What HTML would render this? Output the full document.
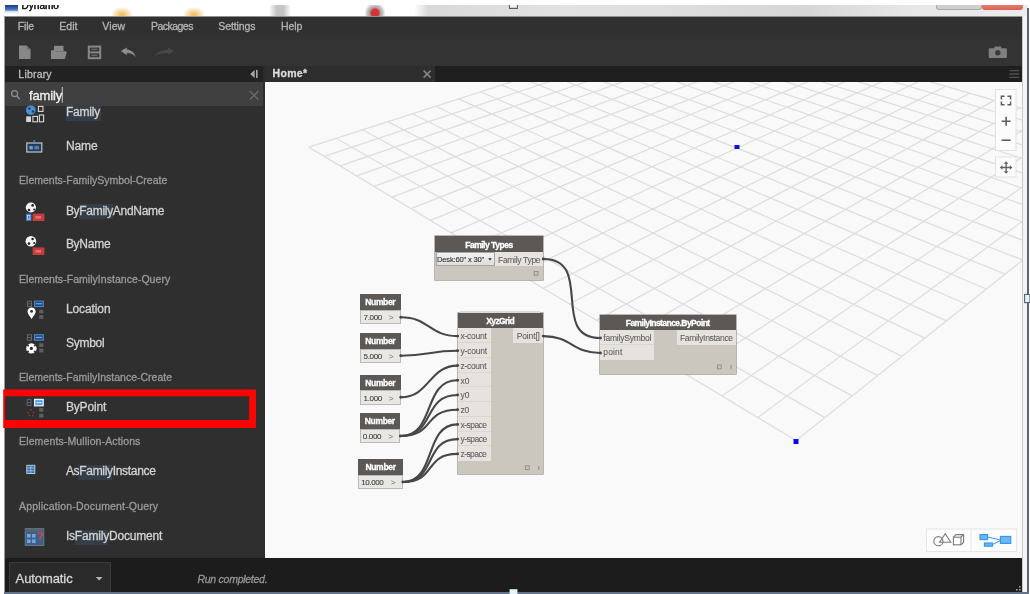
<!DOCTYPE html>
<html>
<head>
<meta charset="utf-8">
<title>Dynamo</title>
<style>
html,body{margin:0;padding:0;}
body{width:1030px;height:594px;position:relative;overflow:hidden;background:#ffffff;font-family:'Liberation Sans',sans-serif;}
.a{position:absolute;}
.t{position:absolute;white-space:pre;font-family:'Liberation Sans',sans-serif;-webkit-text-stroke:0.3px currentColor;}
svg{position:absolute;left:0;top:0;overflow:visible;}
.nh{position:absolute;background:#5c5856;}
.nb{position:absolute;background:#cbc7bf;}
.pl{position:absolute;background:#e6e3de;}
.hl{position:absolute;background:#353d48;height:15px;margin-top:1px;}
</style>
</head>
<body>
<div id="root" style="position:absolute;left:0;top:0;width:1030px;height:594px;will-change:transform;filter:blur(0.45px);">
<!-- window chrome -->
<div class="a" id="titlebar" style="left:4px;top:5px;width:1024px;height:12px;background:linear-gradient(90deg,#ffffff 0,#ffffff 410px,#d9d9d9 424px,#e2e2e2 560px,#dcdcdc 700px,#d6d6d6 800px,#e6e6e6 900px,#ececec 1024px);"></div>
<div class="a" style="left:5px;top:4.7px;width:13px;height:6.5px;background:linear-gradient(180deg,#1c3a85,#3f67b4 60%,#7f9fd6);"></div><div class="a" style="left:4px;top:11px;width:15px;height:3px;background:linear-gradient(180deg,rgba(190,205,225,0.7),rgba(255,255,255,0));"></div>
<div class="a" style="left:21.6px;top:4.7px;width:60px;height:8px;overflow:hidden;"><div class="t" style="left:0;top:-4.6px;font-size:10px;line-height:12px;color:#1c1c1c;text-shadow:0 0 0.5px #1c1c1c;">Dynamo</div></div>
<div class="a" style="left:111px;top:7px;width:22px;height:10px;background:radial-gradient(ellipse at 50% 75%,#efb856 0,rgba(241,190,100,0) 72%);"></div>
<div class="a" style="left:183px;top:7px;width:22px;height:10px;background:radial-gradient(ellipse at 50% 75%,#efb856 0,rgba(241,190,100,0) 72%);"></div>
<div class="a" style="left:269px;top:5px;width:22px;height:12px;background:linear-gradient(90deg,rgba(200,200,200,0),#c4c4c4 35%,#c4c4c4 65%,rgba(200,200,200,0));"></div>
<div class="a" style="left:359px;top:5px;width:32px;height:11.5px;overflow:hidden;"><div class="a" style="left:0;top:-1px;width:32px;height:18px;background:radial-gradient(circle at 50% 50%,#d23434 0,#d23434 3.6px,#c08080 5px,#b4b4b4 6.2px,#c2c2c2 7.6px,rgba(215,215,215,0) 10.5px);"></div></div>
<div class="a" style="left:936px;top:5px;width:46px;height:5px;background:#cfcfcf;border:1px solid #a9a9a9;border-top:0;border-radius:0 0 3px 3px;box-sizing:border-box;"></div>
<div class="a" style="left:982px;top:5px;width:41px;height:5px;background:linear-gradient(180deg,#e8806c,#d8614f);border-radius:0 0 3px 3px;"></div>
<div class="a" style="left:1022px;top:16px;width:5px;height:576px;background:#f4f4f4;border-left:1px solid #c9c9c9;box-sizing:border-box;"></div>
<div class="a" style="left:1027px;top:8px;width:2px;height:586px;background:#56657a;"></div>
<div class="a" style="left:4px;top:592.4px;width:1025px;height:1.6px;background:#63748a;"></div>

<!-- app -->
<div class="a" style="left:4px;top:16px;width:1px;height:576px;background:#9a9a9a;"></div>
<div class="a" style="left:4px;top:16px;width:1018px;height:1px;background:#8f8f8f;"></div>
<div class="a" id="menubar" style="left:5px;top:17px;width:1017px;height:22px;background:#303030;"></div>
<div class="a" id="toolbar" style="left:5px;top:39px;width:1017px;height:27px;background:#333333;"></div>
<div class="a" id="libhead" style="left:5px;top:66px;width:258px;height:16px;background:#222222;"></div><div class="a" style="left:263px;top:66px;width:3px;height:16px;background:#2b2b2b;"></div><div class="a" style="left:5px;top:37px;width:1017px;height:1px;background:#343434;"></div>
<div class="a" id="tabbar" style="left:265px;top:66px;width:757px;height:16px;background:#1f1f1f;"></div>
<div class="a" id="tab" style="left:265px;top:66px;width:170px;height:16px;background:#2e2e2e;"></div>
<div class="a" id="sidebar" style="left:5px;top:82px;width:260px;height:476px;background:#2f2f2f;"></div>
<div class="a" id="search" style="left:5px;top:82px;width:258px;height:24px;background:#404040;"></div>
<div class="a" id="canvas" style="left:265px;top:82px;width:757px;height:476px;background:#f9f9f9;"></div>
<div class="a" id="status" style="left:5px;top:558px;width:1017px;height:34px;background:#1c1c1c;"></div>
<div class="a" id="runbox" style="left:9px;top:562px;width:102px;height:30px;background:#2a2a2a;border:1px solid #3a3a3a;border-bottom:0;box-sizing:border-box;"></div>

<!-- highlights -->
<div class="hl" style="left:66px;top:104.5px;width:34.5px;"></div>
<div class="hl" style="left:79.3px;top:203px;width:34px;"></div>
<div class="hl" style="left:78.4px;top:464px;width:34px;"></div>
<div class="hl" style="left:74.8px;top:528.5px;width:33.5px;"></div>

<!-- canvas svg -->
<svg width="1030" height="594" viewBox="0 0 1030 594">
<defs><clipPath id="cc"><rect x="265" y="82" width="757" height="476"/></clipPath></defs>
<g clip-path="url(#cc)">
<g stroke='#dedede' stroke-width='1.25' fill='none'><line x1='308.8' y1='147.1' x2='710.5' y2='17.8'/><line x1='308.8' y1='147.1' x2='796.1' y2='440.5'/><line x1='324.2' y1='156.3' x2='727.1' y2='22.7'/><line x1='336.1' y1='138.3' x2='824.9' y2='417.6'/><line x1='340.1' y1='165.9' x2='744.1' y2='27.6'/><line x1='362.5' y1='129.8' x2='852.1' y2='395.9'/><line x1='356.7' y1='175.9' x2='761.7' y2='32.7'/><line x1='387.8' y1='121.6' x2='877.7' y2='375.6'/><line x1='374.1' y1='186.4' x2='779.8' y2='38.0'/><line x1='412.3' y1='113.8' x2='901.9' y2='356.3'/><line x1='392.1' y1='197.2' x2='798.4' y2='43.4'/><line x1='435.8' y1='106.2' x2='924.8' y2='338.1'/><line x1='410.9' y1='208.6' x2='817.6' y2='49.0'/><line x1='458.6' y1='98.9' x2='946.5' y2='320.9'/><line x1='430.5' y1='220.4' x2='837.3' y2='54.7'/><line x1='480.6' y1='91.8' x2='967.0' y2='304.5'/><line x1='451.1' y1='232.8' x2='857.7' y2='60.7'/><line x1='501.8' y1='85.0' x2='986.5' y2='289.0'/><line x1='472.5' y1='245.7' x2='878.7' y2='66.8'/><line x1='522.4' y1='78.3' x2='1005.1' y2='274.2'/><line x1='495.0' y1='259.2' x2='900.3' y2='73.1'/><line x1='542.3' y1='72.0' x2='1022.8' y2='260.1'/><line x1='518.6' y1='273.4' x2='922.7' y2='79.6'/><line x1='561.5' y1='65.8' x2='1039.6' y2='246.7'/><line x1='543.3' y1='288.3' x2='945.8' y2='86.3'/><line x1='580.1' y1='59.8' x2='1055.7' y2='233.9'/><line x1='569.3' y1='304.0' x2='969.7' y2='93.2'/><line x1='598.2' y1='54.0' x2='1071.1' y2='221.7'/><line x1='596.6' y1='320.4' x2='994.3' y2='100.4'/><line x1='615.7' y1='48.3' x2='1085.8' y2='210.0'/><line x1='625.4' y1='337.8' x2='1019.9' y2='107.9'/><line x1='632.7' y1='42.9' x2='1099.9' y2='198.8'/><line x1='655.8' y1='356.1' x2='1046.3' y2='115.5'/><line x1='649.2' y1='37.6' x2='1113.4' y2='188.0'/><line x1='687.9' y1='375.4' x2='1073.7' y2='123.5'/><line x1='665.2' y1='32.4' x2='1126.3' y2='177.7'/><line x1='721.9' y1='395.9' x2='1102.1' y2='131.8'/><line x1='680.7' y1='27.4' x2='1138.7' y2='167.8'/><line x1='757.9' y1='417.5' x2='1131.6' y2='140.3'/><line x1='695.8' y1='22.6' x2='1150.7' y2='158.4'/><line x1='796.1' y1='440.5' x2='1162.1' y2='149.2'/><line x1='710.5' y1='17.8' x2='1162.1' y2='149.2'/></g>
<rect x="734.5" y="145" width="5" height="4" fill="#1010e0"/>
<rect x="793.5" y="439" width="5" height="5" fill="#0a0ae6"/>
</g>
</svg>

<!-- nodes -->
<!-- Family Types -->
<div class="nb" style="left:435px;top:236.4px;width:108px;height:43.7px;box-shadow:0 0 0 0.6px #8d8a85;"></div>
<div class="nh" style="left:435px;top:236.4px;width:108px;height:15.2px;"></div>
<div class="a" style="left:435.5px;top:251.5px;width:59px;height:14.5px;background:linear-gradient(180deg,#f3f3f3,#dddddd);border:1px solid #a5a5a5;box-sizing:border-box;"></div>
<div class="pl" style="left:494.5px;top:251.5px;width:48.5px;height:14.5px;"></div>
<!-- Numbers -->
<div class="nh" style="left:360px;top:293.5px;width:40.5px;height:16px;"></div>
<div class="pl" style="left:360px;top:309.5px;width:40.5px;height:14.5px;background:#e9e7e3;box-shadow:inset 0 0 0 1px #bdbab4;"></div>
<div class="nh" style="left:360px;top:332.5px;width:40.5px;height:16px;"></div>
<div class="pl" style="left:360px;top:348.5px;width:40.5px;height:14.5px;background:#e9e7e3;box-shadow:inset 0 0 0 1px #bdbab4;"></div>
<div class="nh" style="left:360px;top:374.5px;width:40.5px;height:15.5px;"></div>
<div class="pl" style="left:360px;top:390px;width:40.5px;height:14.5px;background:#e9e7e3;box-shadow:inset 0 0 0 1px #bdbab4;"></div>
<div class="nh" style="left:359.5px;top:413px;width:40.5px;height:15.5px;"></div>
<div class="pl" style="left:359.5px;top:428.5px;width:40.5px;height:14.5px;background:#e9e7e3;box-shadow:inset 0 0 0 1px #bdbab4;"></div>
<div class="nh" style="left:358px;top:459px;width:44.5px;height:15.5px;"></div>
<div class="pl" style="left:358px;top:474.5px;width:44.5px;height:14.5px;background:#e9e7e3;box-shadow:inset 0 0 0 1px #bdbab4;"></div>
<!-- XyzGrid -->
<div class="nb" style="left:457.5px;top:312.5px;width:85.5px;height:161.5px;box-shadow:0 0 0 0.6px #8d8a85;"></div>
<div class="nh" style="left:457.5px;top:312.5px;width:85.5px;height:15.5px;"></div>
<div class="pl" style="left:457.5px;top:328px;width:33.5px;height:133px;"></div>
<div class="pl" style="left:513px;top:328px;width:30px;height:15px;"></div>
<!-- FamilyInstance.ByPoint -->
<div class="nb" style="left:600.3px;top:314.5px;width:135.5px;height:59px;box-shadow:0 0 0 0.6px #8d8a85;"></div>
<div class="nh" style="left:600.3px;top:314.5px;width:135.5px;height:15.5px;"></div>
<div class="pl" style="left:600.3px;top:330px;width:53.5px;height:29.5px;"></div>
<div class="pl" style="left:676.5px;top:330px;width:59.3px;height:14.7px;"></div>
<div class="a" style="left:457.5px;top:342.32px;width:33.5px;height:0.8px;background:#dad7d1;"></div>
<div class="a" style="left:457.5px;top:357.04px;width:33.5px;height:0.8px;background:#dad7d1;"></div>
<div class="a" style="left:457.5px;top:371.76px;width:33.5px;height:0.8px;background:#dad7d1;"></div>
<div class="a" style="left:457.5px;top:386.48px;width:33.5px;height:0.8px;background:#dad7d1;"></div>
<div class="a" style="left:457.5px;top:401.20px;width:33.5px;height:0.8px;background:#dad7d1;"></div>
<div class="a" style="left:457.5px;top:415.92px;width:33.5px;height:0.8px;background:#dad7d1;"></div>
<div class="a" style="left:457.5px;top:430.64px;width:33.5px;height:0.8px;background:#dad7d1;"></div>
<div class="a" style="left:457.5px;top:445.36px;width:33.5px;height:0.8px;background:#dad7d1;"></div>
<div class="a" style="left:600.3px;top:344.3px;width:53.5px;height:0.8px;background:#dad7d1;"></div>
<div class="a" style="left:460px;top:310.6px;width:80px;height:2px;background:#dcdbd7;"></div>


<svg width="1030" height="594" viewBox="0 0 1030 594">
<g stroke='#474747' stroke-width='2.1' fill='none' stroke-linecap='round'><path d='M543.5,259.0 C594.6,259.0 549.2,338.0 600.3,338.0'/><path d='M401.0,317.2 C429.2,317.2 429.2,336.1 457.4,336.1'/><path d='M401.0,355.7 C429.2,355.7 429.2,350.8 457.4,350.8'/><path d='M401.0,397.2 C429.2,397.2 429.2,365.6 457.4,365.6'/><path d='M400.6,436.0 C435.8,436.0 422.2,380.3 457.4,380.3'/><path d='M400.6,436.0 C435.8,436.0 422.2,395.0 457.4,395.0'/><path d='M400.6,436.0 C435.8,436.0 422.2,409.7 457.4,409.7'/><path d='M403.0,482.0 C436.7,482.0 423.7,424.4 457.4,424.4'/><path d='M403.0,482.0 C436.7,482.0 423.7,439.1 457.4,439.1'/><path d='M403.0,482.0 C436.7,482.0 423.7,453.9 457.4,453.9'/><path d='M543.5,336.1 C571.9,336.1 571.9,353.0 600.3,353.0'/></g>
<!-- toolbar icons -->
<g fill="#888888">
<path d="M19,45.6 h7.6 l4,4 v9.4 h-11.6 z"/>
<path d="M26.6,45.6 v4 h4 z" fill="#6a6a6a"/>
<path d="M54,45.8 h9.5 v5.2 h-9.5 z"/>
<path d="M51,50.2 h3.6 l1,1 h9.6 l1.6,1 l-2,6.8 h-13.8 z"/>
</g>
<g fill="none" stroke="#888888" stroke-width="2">
<rect x="88.8" y="46.6" width="11.4" height="11.6"/>
<path d="M88.8,52.4 h11.4"/>
</g>
<rect x="91.5" y="48.6" width="6" height="1.6" fill="#666"/>
<rect x="91.5" y="54.6" width="6" height="1.6" fill="#666"/>
<path d="M120.8,51 l6,-3.6 v2.2 c4.6,0.4 7.8,3.2 9,7.4 c-2.4,-2.8 -5,-4 -9,-4 v2.2 z" fill="#8c8c8c"/>
<path d="M174,51 l-6,-3.4 v2.1 c-6,0.3 -11.4,2.6 -13.6,6.6 c3.4,-2.4 8.2,-3.4 13.6,-3.4 v2.1 z" fill="#474747"/>
<!-- camera -->
<g>
<rect x="988.7" y="48.2" width="18.2" height="9.8" rx="1" fill="#7f7f7f"/>
<rect x="994.3" y="46.6" width="7" height="2.4" rx="0.8" fill="#7f7f7f"/>
<circle cx="997.8" cy="52.8" r="2.7" fill="#3a3a3a"/>
</g>
<!-- hamburger -->
<g stroke="#505050" stroke-width="1.4">
<path d="M1009.4,70.6 h9.8 M1009.4,74 h9.8 M1009.4,77.4 h9.8"/>
</g>
<!-- library collapse -->
<path d="M250.2,73.9 l4.4,-4 v8 z" fill="#a8a8a8"/>
<rect x="256" y="69.9" width="1.6" height="8" fill="#a8a8a8"/>
<!-- tab close -->
<path d="M423.6,70.6 l7,7 M430.6,70.6 l-7,7" stroke="#858585" stroke-width="1.5" fill="none"/>
<!-- search icon + clear -->
<circle cx="14.6" cy="93.6" r="3" fill="none" stroke="#8a8a8a" stroke-width="1.3"/>
<path d="M16.8,96 l3,3.2" stroke="#8a8a8a" stroke-width="1.5" fill="none"/>
<path d="M249.8,91 l8.6,8.6 M258.4,91 l-8.6,8.6" stroke="#6a6a6a" stroke-width="1.4" fill="none"/>
<path d="M62.3,87 v15.6" stroke="#d8d8e8" stroke-width="0.9" fill="none"/>

<!-- sidebar icons -->
<!-- Family -->
<circle cx="30.8" cy="110.2" r="4.8" fill="#4a90d9"/>
<circle cx="29.4" cy="108.6" r="1.3" fill="#1f3f66"/><circle cx="33" cy="111.6" r="1.3" fill="#1f3f66"/>
<g fill="none" stroke="#d8d8d8" stroke-width="1.1">
<rect x="38.4" y="106.4" width="4.6" height="5"/>
<rect x="32.9" y="116.4" width="4.6" height="5.4"/>
<rect x="39.4" y="115" width="4.2" height="6.8"/>
</g>
<rect x="26.2" y="116.4" width="4.8" height="5.6" fill="#d8d8d8"/>
<!-- Name -->
<rect x="26.8" y="143" width="15" height="9" fill="#2a3c55" stroke="#c4c4c4" stroke-width="1.2"/>
<rect x="29.4" y="146" width="3.4" height="3.4" fill="#5fa0e0"/>
<rect x="34.4" y="146" width="4.6" height="3.4" fill="#4a7fb8"/>
<path d="M34.2,140 v3" stroke="#4a90d9" stroke-width="1.4"/>
<!-- ByFamilyAndName -->
<circle cx="30.9" cy="207.5" r="5.1" fill="#f4f4f4"/>
<circle cx="29" cy="210" r="1.3" fill="#222"/><circle cx="32.6" cy="205.4" r="1.3" fill="#222"/><circle cx="34.2" cy="209.4" r="1" fill="#222"/>
<rect x="26" y="213.6" width="5.4" height="7.4" fill="#3c78c4"/>
<rect x="27.4" y="215.4" width="2.6" height="3.8" fill="none" stroke="#cfe0f5" stroke-width="0.8"/>
<rect x="32.6" y="213.6" width="11.8" height="7.4" fill="#c43c3c"/>
<rect x="35.4" y="216" width="5.6" height="2.6" fill="#e07070"/>
<!-- ByName -->
<circle cx="30.9" cy="241.2" r="5.3" fill="#f4f4f4"/>
<circle cx="29" cy="243.6" r="1.3" fill="#222"/><circle cx="32.6" cy="239" r="1.3" fill="#222"/><circle cx="34.2" cy="243" r="1" fill="#222"/>
<rect x="32.6" y="247.4" width="11.8" height="7.6" fill="#c43c3c"/>
<rect x="35.4" y="250" width="5.6" height="2.6" fill="#e07070"/>
<!-- Location -->
<g id="qtop">
<rect x="27.6" y="301.2" width="3.8" height="5.4" fill="none" stroke="#707070" stroke-width="0.9"/>
<path d="M27.6,303.9 h3.8" stroke="#707070" stroke-width="0.8"/>
<rect x="34.5" y="301.1" width="8.8" height="5.5" fill="#244a76" stroke="#4486cf" stroke-width="1.1"/>
<path d="M35.8,303.8 h6.2" stroke="#7fb8f0" stroke-width="1"/>
<rect x="39.2" y="309.6" width="4.2" height="3.8" fill="#5e5e5e"/>
<rect x="39.2" y="315" width="4.2" height="3.8" fill="#5e5e5e"/>
</g>
<path d="M31.6,307.4 c-2.4,0 -4.1,1.8 -4.1,4 c0,2.6 2.6,4.6 4.1,7.6 c1.5,-3 4.1,-5 4.1,-7.6 c0,-2.2 -1.7,-4 -4.1,-4 z" fill="#ffffff"/>
<circle cx="31.6" cy="311.4" r="1.4" fill="#2f2f2f"/>
<!-- Symbol -->
<g transform="translate(0,33.6)">
<rect x="27.6" y="301.2" width="3.8" height="5.4" fill="none" stroke="#707070" stroke-width="0.9"/>
<path d="M27.6,303.9 h3.8" stroke="#707070" stroke-width="0.8"/>
<rect x="34.5" y="301.1" width="8.8" height="5.5" fill="#244a76" stroke="#4486cf" stroke-width="1.1"/>
<path d="M35.8,303.8 h6.2" stroke="#7fb8f0" stroke-width="1"/>
<rect x="39.2" y="309.6" width="4.2" height="3.8" fill="#5e5e5e"/>
<rect x="39.2" y="315" width="4.2" height="3.8" fill="#5e5e5e"/>
</g>
<circle cx="31.4" cy="348.4" r="5.2" fill="#ffffff"/>
<circle cx="31.4" cy="348.4" r="1.6" fill="#2a2a2a"/>
<circle cx="28" cy="345.4" r="1" fill="#2a2a2a"/><circle cx="34.8" cy="345.4" r="1" fill="#2a2a2a"/><circle cx="28" cy="351.6" r="1" fill="#2a2a2a"/><circle cx="34.8" cy="351.6" r="1" fill="#2a2a2a"/>
<!-- ByPoint -->
<rect x="27.2" y="399.6" width="3.8" height="6" fill="none" stroke="#6a6570" stroke-width="0.9"/>
<path d="M27.2,402.6 h3.8" stroke="#6a6570" stroke-width="0.8"/>
<rect x="34.6" y="399.4" width="8.6" height="6.4" fill="#5aa2ea" stroke="#eaf2fb" stroke-width="1.3"/>
<path d="M36.4,402.6 h5" stroke="#dcecfb" stroke-width="1"/>
<g fill="#8a3a3a"><circle cx="30.8" cy="410" r="0.9"/><circle cx="28.2" cy="412.6" r="0.9"/><circle cx="33.6" cy="412.4" r="0.9"/><circle cx="29.2" cy="415.6" r="0.9"/><circle cx="33" cy="415.6" r="0.9"/></g>
<rect x="39.2" y="408" width="4.2" height="3.8" fill="#5e5e5e"/>
<rect x="39.2" y="413.8" width="4.2" height="3.8" fill="#5e5e5e"/>
<!-- AsFamilyInstance -->
<rect x="26.8" y="465.3" width="8" height="8.2" fill="#3a6ea8" stroke="#a9c9ea" stroke-width="1"/>
<path d="M30.8,465.3 v8.2 M26.8,468 h8 M26.8,470.8 h8" stroke="#a9c9ea" stroke-width="0.8" fill="none"/>
<!-- IsFamilyDocument -->
<rect x="25.2" y="528.6" width="18.6" height="16.8" fill="#3f5f86" stroke="#6d7f93" stroke-width="0.9"/>
<rect x="25.2" y="528.6" width="18.6" height="3" fill="#5a6470"/>
<g fill="#6fa6e0"><rect x="27" y="534" width="3.6" height="3.6"/><rect x="32" y="534" width="3.6" height="3.6"/><rect x="27" y="539.4" width="3.6" height="3.6"/><rect x="32" y="539.4" width="3.6" height="3.6"/></g>
<text x="37" y="540" font-family="'Liberation Sans',sans-serif" font-size="11" font-weight="700" fill="#e04444">?</text>

<!-- status dropdown arrow -->
<path d="M95.6,577 h7 l-3.5,3.6 z" fill="#b4b4b4"/>

<!-- canvas controls -->
<g>
<rect x="995.5" y="89.5" width="20.5" height="61" fill="#fcfcfc" stroke="#e2e2e2" stroke-width="1"/>
<rect x="995.5" y="157" width="20.5" height="20" fill="#fcfcfc" stroke="#e2e2e2" stroke-width="1"/>
<g stroke="#5f5f5f" stroke-width="1.5" fill="none">
<path d="M1001.4,99.4 v-3.2 h3.2 M1007.4,96.2 h3.2 v3.2 M1010.6,101.6 v3.2 h-3.2 M1004.6,104.8 h-3.2 v-3.2"/>
<path d="M1001.6,121.2 h9 M1006.1,116.7 v9" stroke-width="1.6"/>
<path d="M1001.6,140.2 h9" stroke-width="1.6"/>
<path d="M1001.6,167.5 h9 M1006.1,163 v9" stroke-width="1.3"/>
</g>
<g fill="#5f5f5f">
<path d="M1006.1,161.2 l2.3,2.6 h-4.6 z"/><path d="M1006.1,173.8 l2.3,-2.6 h-4.6 z"/><path d="M999.8,167.5 l2.6,-2.3 v4.6 z"/><path d="M1012.4,167.5 l-2.6,-2.3 v4.6 z"/>
</g>
</g>
<!-- bottom-right view toggle -->
<g>
<rect x="926.5" y="529" width="90" height="22.5" fill="#fdfdfd" stroke="#e6e6e6" stroke-width="1"/>
<path d="M971,529 v22.5" stroke="#e6e6e6" stroke-width="1"/>
<g fill="none" stroke="#7a7a7a" stroke-width="1.1">
<circle cx="938.4" cy="541.2" r="4.6"/>
<path d="M945.2,533.8 l5.6,8.4 h-11.2 z"/>
<rect x="953.4" y="537.2" width="7.6" height="7.6"/>
<path d="M953.4,537.2 l2.6,-2.6 h7.6 v7.6 l-2.6,2.6 M961,537.2 l2.6,-2.6"/>
</g>
<g fill="#6db6f5" stroke="#2f96ee" stroke-width="1.1">
<rect x="980" y="534.6" width="7.6" height="5"/>
<rect x="984.4" y="543" width="8" height="3.2"/>
<rect x="1000.4" y="536.4" width="10.4" height="7"/>
</g>
<path d="M987.6,537 l12.8,3 M992.4,544.6 l8,-4" stroke="#2f96ee" stroke-width="1" fill="none"/>
</g>
<!-- node footers / ports -->
<g fill="none" stroke="#8f8b85" stroke-width="0.9">
<rect x="534.2" y="271.4" width="3.8" height="3.8"/>
<rect x="525.4" y="465.8" width="3.8" height="3.8"/>
<rect x="717.4" y="365" width="3.8" height="3.8"/>
</g>
<g fill="#8f8b85">
<rect x="538.3" y="466" width="1" height="4"/>
<rect x="730.6" y="365" width="1" height="4"/>
</g>
<!-- resize grip -->
<g fill="#9a9a9a"><rect x="1019" y="586" width="1.6" height="1.6"/><rect x="1016" y="589" width="1.6" height="1.6"/><rect x="1019" y="589" width="1.6" height="1.6"/></g>

<path d="M488.2,258.2 h3.6 l-1.8,2.2 z" fill="#222"/>
<circle cx="457.6" cy="336.1" r="1.45" fill="#454545"/><circle cx="457.6" cy="350.8" r="1.45" fill="#454545"/><circle cx="457.6" cy="365.5" r="1.45" fill="#454545"/><circle cx="457.6" cy="380.3" r="1.45" fill="#454545"/><circle cx="457.6" cy="395.0" r="1.45" fill="#454545"/><circle cx="457.6" cy="409.7" r="1.45" fill="#454545"/><circle cx="457.6" cy="424.4" r="1.45" fill="#454545"/><circle cx="457.6" cy="439.1" r="1.45" fill="#454545"/><circle cx="457.6" cy="453.9" r="1.45" fill="#454545"/><circle cx="600.4" cy="338" r="1.45" fill="#454545"/><circle cx="600.4" cy="353" r="1.45" fill="#454545"/><circle cx="543.2" cy="259" r="1.45" fill="#454545"/><circle cx="543.2" cy="336.1" r="1.45" fill="#454545"/><circle cx="400.8" cy="317.2" r="1.45" fill="#454545"/><circle cx="400.8" cy="355.7" r="1.45" fill="#454545"/><circle cx="400.8" cy="397.2" r="1.45" fill="#454545"/><circle cx="400.4" cy="436" r="1.45" fill="#454545"/><circle cx="402.8" cy="482" r="1.45" fill="#454545"/>
<!-- selection handles -->
<path d="M509.4,5 v3.4 h8 v-3.4" fill="#eef4f8" stroke="#56606c" stroke-width="1.1"/>
<rect x="509.6" y="589.2" width="7.8" height="5" fill="#e6f6f8"/>
<rect x="1024.6" y="294.4" width="5.4" height="8.2" fill="#e2f2f8" stroke="#56606c" stroke-width="1.1"/>

</svg>

<div class='t' style="left:17.87px;top:19.46px;font-size:10.5px;line-height:15px;letter-spacing:-0.219px;color:#b4b4b4;">File</div>
<div class='t' style="left:59.37px;top:19.46px;font-size:10.5px;line-height:15px;letter-spacing:-0.012px;color:#b4b4b4;">Edit</div>
<div class='t' style="left:102.27px;top:19.46px;font-size:10.5px;line-height:15px;letter-spacing:0.117px;color:#b4b4b4;">View</div>
<div class='t' style="left:151.07px;top:19.46px;font-size:10.5px;line-height:15px;letter-spacing:-0.535px;color:#b4b4b4;">Packages</div>
<div class='t' style="left:218.37px;top:19.46px;font-size:10.5px;line-height:15px;letter-spacing:-0.126px;color:#b4b4b4;">Settings</div>
<div class='t' style="left:280.97px;top:19.46px;font-size:10.5px;line-height:15px;letter-spacing:-0.066px;color:#b4b4b4;">Help</div>
<div class='t' style="left:18.37px;top:67.26px;font-size:10.5px;line-height:15px;letter-spacing:0.191px;color:#bdbdbd;">Library</div>
<div class='t' style="left:272.57px;top:66.46px;font-size:10.5px;line-height:15px;letter-spacing:0.296px;color:#dddddd;font-weight:700;">Home*</div>
<div class='t' style="left:29.02px;top:86.90px;font-size:13px;line-height:18px;letter-spacing:-0.164px;color:#f2f2f2;">family</div>
<div class='t' style="left:65.88px;top:104.24px;font-size:12px;line-height:17px;letter-spacing:-0.177px;color:#d2d2d2;">Family</div>
<div class='t' style="left:65.88px;top:138.24px;font-size:12px;line-height:17px;letter-spacing:-0.109px;color:#d2d2d2;">Name</div>
<div class='t' style="left:65.88px;top:202.54px;font-size:12px;line-height:17px;letter-spacing:-0.295px;color:#d2d2d2;">ByFamilyAndName</div>
<div class='t' style="left:65.88px;top:236.04px;font-size:12px;line-height:17px;letter-spacing:-0.256px;color:#d2d2d2;">ByName</div>
<div class='t' style="left:65.88px;top:301.34px;font-size:12px;line-height:17px;letter-spacing:-0.087px;color:#d2d2d2;">Location</div>
<div class='t' style="left:65.88px;top:334.84px;font-size:12px;line-height:17px;letter-spacing:-0.239px;color:#d2d2d2;">Symbol</div>
<div class='t' style="left:65.88px;top:399.34px;font-size:12px;line-height:17px;letter-spacing:-0.154px;color:#d2d2d2;">ByPoint</div>
<div class='t' style="left:65.88px;top:463.44px;font-size:12px;line-height:17px;letter-spacing:-0.314px;color:#d2d2d2;">AsFamilyInstance</div>
<div class='t' style="left:65.88px;top:527.74px;font-size:12px;line-height:17px;letter-spacing:-0.199px;color:#d2d2d2;">IsFamilyDocument</div>
<div class='t' style="left:19.07px;top:173.46px;font-size:10.5px;line-height:15px;letter-spacing:0.001px;color:#9a9a9a;">Elements-FamilySymbol-Create</div>
<div class='t' style="left:19.07px;top:271.66px;font-size:10.5px;line-height:15px;letter-spacing:0.041px;color:#9a9a9a;">Elements-FamilyInstance-Query</div>
<div class='t' style="left:19.07px;top:370.46px;font-size:10.5px;line-height:15px;letter-spacing:0.002px;color:#9a9a9a;">Elements-FamilyInstance-Create</div>
<div class='t' style="left:19.07px;top:433.66px;font-size:10.5px;line-height:15px;letter-spacing:0.124px;color:#9a9a9a;">Elements-Mullion-Actions</div>
<div class='t' style="left:19.07px;top:498.66px;font-size:10.5px;line-height:15px;letter-spacing:0.170px;color:#9a9a9a;">Application-Document-Query</div>
<div class='t' style="left:15.62px;top:569.90px;font-size:13px;line-height:18px;letter-spacing:-0.094px;color:#d4d4d4;">Automatic</div>
<div class='t' style="left:197.47px;top:572.26px;font-size:10.5px;line-height:15px;letter-spacing:-0.264px;color:#969696;font-style:italic;">Run completed.</div>
<div class='t' style="left:465.19px;top:238.55px;font-size:8.5px;line-height:12px;letter-spacing:-0.481px;color:#ffffff;font-weight:700;">Family Types</div>
<div class='t' style="left:436.94px;top:254.17px;font-size:7.6px;line-height:11px;letter-spacing:-0.181px;color:#2a2a2a;-webkit-text-stroke:0.08px currentColor;">Desk:60" x 30"</div>
<div class='t' style="left:498.09px;top:253.65px;font-size:8.5px;line-height:12px;letter-spacing:-0.319px;color:#5e5e5e;-webkit-text-stroke:0.08px currentColor;">Family Type</div>
<div class='t' style="left:365.29px;top:296.05px;font-size:8.5px;line-height:12px;letter-spacing:-0.360px;color:#ffffff;font-weight:700;">Number</div>
<div class='t' style="left:365.29px;top:334.85px;font-size:8.5px;line-height:12px;letter-spacing:-0.360px;color:#ffffff;font-weight:700;">Number</div>
<div class='t' style="left:365.29px;top:376.65px;font-size:8.5px;line-height:12px;letter-spacing:-0.360px;color:#ffffff;font-weight:700;">Number</div>
<div class='t' style="left:364.79px;top:415.35px;font-size:8.5px;line-height:12px;letter-spacing:-0.343px;color:#ffffff;font-weight:700;">Number</div>
<div class='t' style="left:365.39px;top:461.15px;font-size:8.5px;line-height:12px;letter-spacing:-0.293px;color:#ffffff;font-weight:700;">Number</div>
<div class='t' style="left:363.52px;top:312.33px;font-size:8px;line-height:11px;letter-spacing:-0.322px;color:#3a3a3a;-webkit-text-stroke:0.08px currentColor;">7.000</div>
<div class='t' style="left:363.52px;top:351.03px;font-size:8px;line-height:11px;letter-spacing:-0.322px;color:#3a3a3a;-webkit-text-stroke:0.08px currentColor;">5.000</div>
<div class='t' style="left:363.52px;top:392.73px;font-size:8px;line-height:11px;letter-spacing:-0.322px;color:#3a3a3a;-webkit-text-stroke:0.08px currentColor;">1.000</div>
<div class='t' style="left:362.82px;top:431.33px;font-size:8px;line-height:11px;letter-spacing:-0.322px;color:#3a3a3a;-webkit-text-stroke:0.08px currentColor;">0.000</div>
<div class='t' style="left:361.32px;top:477.23px;font-size:8px;line-height:11px;letter-spacing:-0.425px;color:#3a3a3a;-webkit-text-stroke:0.08px currentColor;">10.000</div>
<div class='t' style="left:389.12px;top:312.33px;font-size:8px;line-height:11px;letter-spacing:0.248px;color:#7a7a7a;-webkit-text-stroke:0.08px currentColor;">&gt;</div>
<div class='t' style="left:389.12px;top:351.03px;font-size:8px;line-height:11px;letter-spacing:0.248px;color:#7a7a7a;-webkit-text-stroke:0.08px currentColor;">&gt;</div>
<div class='t' style="left:389.12px;top:392.73px;font-size:8px;line-height:11px;letter-spacing:0.248px;color:#7a7a7a;-webkit-text-stroke:0.08px currentColor;">&gt;</div>
<div class='t' style="left:388.52px;top:431.33px;font-size:8px;line-height:11px;letter-spacing:0.248px;color:#7a7a7a;-webkit-text-stroke:0.08px currentColor;">&gt;</div>
<div class='t' style="left:390.92px;top:477.23px;font-size:8px;line-height:11px;letter-spacing:0.248px;color:#7a7a7a;-webkit-text-stroke:0.08px currentColor;">&gt;</div>
<div class='t' style="left:486.29px;top:315.35px;font-size:8.5px;line-height:12px;letter-spacing:-0.623px;color:#ffffff;font-weight:700;">XyzGrid</div>
<div class='t' style="left:460.49px;top:330.45px;font-size:8.5px;line-height:12px;letter-spacing:-0.244px;color:#5e5e5e;-webkit-text-stroke:0.08px currentColor;">x-count</div>
<div class='t' style="left:460.49px;top:345.17px;font-size:8.5px;line-height:12px;letter-spacing:-0.216px;color:#5e5e5e;-webkit-text-stroke:0.08px currentColor;">y-count</div>
<div class='t' style="left:460.49px;top:359.89px;font-size:8.5px;line-height:12px;letter-spacing:-0.301px;color:#5e5e5e;-webkit-text-stroke:0.08px currentColor;">z-count</div>
<div class='t' style="left:460.49px;top:374.61px;font-size:8.5px;line-height:12px;letter-spacing:-0.010px;color:#5e5e5e;-webkit-text-stroke:0.08px currentColor;">x0</div>
<div class='t' style="left:460.49px;top:389.33px;font-size:8.5px;line-height:12px;letter-spacing:-0.010px;color:#5e5e5e;-webkit-text-stroke:0.08px currentColor;">y0</div>
<div class='t' style="left:460.49px;top:404.05px;font-size:8.5px;line-height:12px;letter-spacing:-0.110px;color:#5e5e5e;-webkit-text-stroke:0.08px currentColor;">z0</div>
<div class='t' style="left:460.49px;top:418.77px;font-size:8.5px;line-height:12px;letter-spacing:-0.529px;color:#5e5e5e;-webkit-text-stroke:0.08px currentColor;">x-space</div>
<div class='t' style="left:460.49px;top:433.49px;font-size:8.5px;line-height:12px;letter-spacing:-0.500px;color:#5e5e5e;-webkit-text-stroke:0.08px currentColor;">y-space</div>
<div class='t' style="left:460.49px;top:448.21px;font-size:8.5px;line-height:12px;letter-spacing:-0.572px;color:#5e5e5e;-webkit-text-stroke:0.08px currentColor;">z-space</div>
<div class='t' style="left:516.69px;top:330.45px;font-size:8.5px;line-height:12px;letter-spacing:-0.135px;color:#5e5e5e;-webkit-text-stroke:0.08px currentColor;">Point[]</div>
<div class='t' style="left:625.79px;top:316.65px;font-size:8.5px;line-height:12px;letter-spacing:-0.547px;color:#ffffff;font-weight:700;">FamilyInstance.ByPoint</div>
<div class='t' style="left:603.29px;top:331.65px;font-size:8.5px;line-height:12px;letter-spacing:-0.215px;color:#5e5e5e;-webkit-text-stroke:0.08px currentColor;">familySymbol</div>
<div class='t' style="left:603.29px;top:346.45px;font-size:8.5px;line-height:12px;letter-spacing:0.166px;color:#5e5e5e;-webkit-text-stroke:0.08px currentColor;">point</div>
<div class='t' style="left:679.99px;top:331.65px;font-size:8.5px;line-height:12px;letter-spacing:-0.315px;color:#5e5e5e;-webkit-text-stroke:0.08px currentColor;">FamilyInstance</div>

<!-- red annotation -->
<svg width="1030" height="594" viewBox="0 0 1030 594"><path fill="#fb0404" fill-rule="evenodd" d="M3.2,389.6 H256 V428 H3.2 Z M5.1,396.3 V420.1 H249.1 V396.3 Z"/></svg>
</div>
</body>
</html>
